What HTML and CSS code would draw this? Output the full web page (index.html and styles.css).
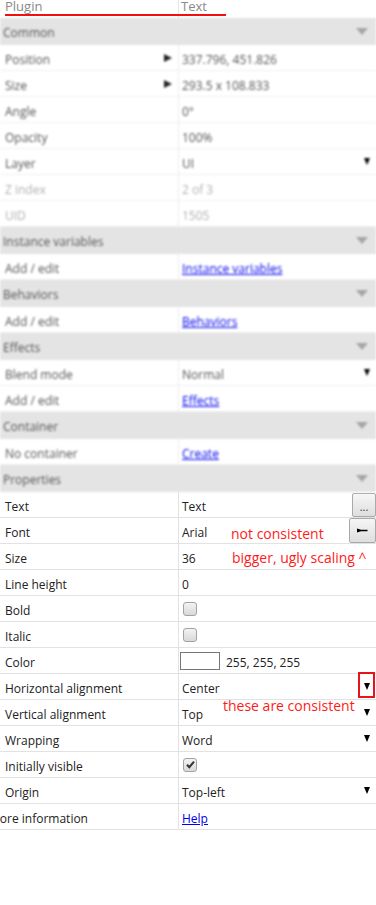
FILE: index.html
```html
<!DOCTYPE html>
<html>
<head>
<meta charset="utf-8">
<title>Properties</title>
<link rel="stylesheet" href="styles.css">
</head>
<body>
<div class="panel">
  <div class="toprow">
    <div class="k">Plugin</div>
    <div class="v">Text</div>
  </div>
  <div class="blurred">
    <div class="sec"><span>Common</span><i class="sectri"></i></div>
    <div class="row"><div class="k">Position<i class="rtri"></i></div><div class="v">337.796, 451.826</div></div>
    <div class="row"><div class="k">Size<i class="rtri"></i></div><div class="v">293.5 x 108.833</div></div>
    <div class="row"><div class="k">Angle</div><div class="v">0°</div></div>
    <div class="row"><div class="k">Opacity</div><div class="v">100%</div></div>
    <div class="row"><div class="k">Layer</div><div class="v drop">UI<i class="dtri"></i></div></div>
    <div class="row dis"><div class="k">Z index</div><div class="v">2 of 3</div></div>
    <div class="row dis"><div class="k">UID</div><div class="v">1505</div></div>
    <div class="sec"><span>Instance variables</span><i class="sectri"></i></div>
    <div class="row"><div class="k">Add / edit</div><div class="v"><a href="#">Instance variables</a></div></div>
    <div class="sec"><span>Behaviors</span><i class="sectri"></i></div>
    <div class="row"><div class="k">Add / edit</div><div class="v"><a href="#">Behaviors</a></div></div>
    <div class="sec"><span>Effects</span><i class="sectri"></i></div>
    <div class="row"><div class="k">Blend mode</div><div class="v drop">Normal<i class="dtri"></i></div></div>
    <div class="row"><div class="k">Add / edit</div><div class="v"><a href="#">Effects</a></div></div>
    <div class="sec"><span>Container</span><i class="sectri"></i></div>
    <div class="row"><div class="k">No container</div><div class="v"><a href="#">Create</a></div></div>
    <div class="sec"><span>Properties</span><i class="sectri"></i></div>
  </div>
  <div class="props">
    <div class="row"><div class="k">Text</div><div class="v btnrow">Text<span class="btn dots">...</span></div></div>
    <div class="row"><div class="k">Font</div><div class="v btnrow">Arial<span class="btn pin"><svg width="11" height="6" viewBox="0 0 11 6"><path d="M0 0.5 L4 1.8 L10.5 1.8 L10.5 3.2 L4 3.2 L0 4.5 Z" fill="#000"/></svg></span></div></div>
    <div class="row"><div class="k">Size</div><div class="v">36</div></div>
    <div class="row"><div class="k">Line height</div><div class="v">0</div></div>
    <div class="row"><div class="k">Bold</div><div class="v"><span class="cb"></span></div></div>
    <div class="row"><div class="k">Italic</div><div class="v"><span class="cb"></span></div></div>
    <div class="row"><div class="k">Color</div><div class="v"><span class="swatch"></span>255, 255, 255</div></div>
    <div class="row"><div class="k">Horizontal alignment</div><div class="v drop">Center<i class="dtri"></i></div></div>
    <div class="row"><div class="k">Vertical alignment</div><div class="v drop">Top<i class="dtri"></i></div></div>
    <div class="row"><div class="k">Wrapping</div><div class="v drop">Word<i class="dtri"></i></div></div>
    <div class="row"><div class="k">Initially visible</div><div class="v"><span class="cb checked"><svg width="11" height="11" viewBox="0 0 11 11"><path d="M2 5.8 L4.3 8.2 L9 2.6" fill="none" stroke="#333" stroke-width="2"/></svg></span></div></div>
    <div class="row"><div class="k">Origin</div><div class="v drop">Top-left<i class="dtri"></i></div></div>
    <div class="row"><div class="k cut">More information</div><div class="v"><a href="#">Help</a></div></div>
  </div>

  <div class="underline"></div>
  <div class="note n1">not consistent</div>
  <div class="note n2">bigger, ugly scaling ^</div>
  <div class="note n3">these are consistent</div>
  <div class="redbox"></div>
</div>
</body>
</html>
```
FILE: styles.css
```css
html, body {
  margin: 0;
  padding: 0;
  background: #fff;
}
body {
  font-family: "Open Sans", "Noto Sans", "DejaVu Sans", sans-serif;
  font-size: 12px;
  color: #222;
  overflow: hidden;
}
.panel {
  position: relative;
  width: 376px;
  height: 905px;
  overflow: hidden;
}
.toprow {
  display: grid;
  grid-template-columns: 179px 1fr;
  height: 18px;
  color: #8a8a8a;
  font-size: 13px;
  line-height: 12px;
}
.toprow .k {
  display: block;
  padding-top: 0;
  padding-left: 5px;
  border-right: 1px solid #e6e6e6;
}
.toprow .v {
  display: block;
  padding-top: 0;
  padding-left: 2px;
}
.blurred {
  filter: blur(0.9px);
}
.sec {
  display: flex;
  align-items: center;
  justify-content: space-between;
  height: 27px;
  box-sizing: border-box;
  padding: 2px 8px 0 3px;
  background: #e4e4e4;
  color: #555;
}
.sectri {
  width: 0;
  height: 0;
  margin-top: -2px;
  border-left: 6px solid transparent;
  border-right: 6px solid transparent;
  border-top: 7px solid #a5a5a5;
}
.row {
  display: grid;
  grid-template-columns: 179px 1fr;
  height: 26px;
  box-sizing: border-box;
  border-bottom: 1px solid #e2e2e2;
}
.blurred .row {
  border-bottom-color: #f1f1f1;
  color: #555;
}
.blurred .row.dis {
  color: #b0b0b0;
}
.k {
  display: flex;
  align-items: center;
  justify-content: space-between;
  padding: 4px 6px 0 5px;
  border-right: 1px solid #e2e2e2;
  white-space: nowrap;
}
.blurred .k {
  border-right-color: #ececec;
}
.k.cut {
  text-indent: -16px;
}
.v {
  display: flex;
  align-items: center;
  padding: 4px 6px 0 3px;
  white-space: nowrap;
}
.drop, .btnrow {
  justify-content: space-between;
}
.btnrow {
  padding-right: 0;
}
.rtri, .dtri, .cb, .swatch, .btn {
  margin-top: -4px;
}
.rtri {
  width: 0;
  height: 0;
  border-top: 4.5px solid transparent;
  border-bottom: 4.5px solid transparent;
  border-left: 8px solid #222;
}
.dtri {
  width: 0;
  height: 0;
  border-left: 3.5px solid transparent;
  border-right: 3.5px solid transparent;
  border-top: 7px solid #000;
}
a {
  color: #0000ee;
  text-decoration: underline;
}
.btn {
  display: flex;
  align-items: center;
  justify-content: center;
  box-sizing: border-box;
  border: 1px solid #a9a9a9;
  border-radius: 2px;
  background: linear-gradient(#f6f6f6, #dedede);
  color: #333;
}
.dots {
  width: 24px;
  height: 24px;
  align-items: flex-end;
  padding-bottom: 4px;
  font-size: 11px;
  line-height: 11px;
}
.pin {
  width: 27px;
  height: 25px;
}
.cb {
  display: flex;
  align-items: center;
  justify-content: center;
  width: 14px;
  height: 14px;
  box-sizing: border-box;
  border: 1px solid #a3a3a3;
  border-radius: 3px;
  background: linear-gradient(#f2f2f2, #d9d9d9);
  margin-left: 1px;
}
.swatch {
  display: inline-block;
  width: 40px;
  height: 18px;
  box-sizing: border-box;
  border: 1px solid #767676;
  background: #fff;
  margin-left: -2px;
  margin-right: 6px;
}
.underline {
  position: absolute;
  left: 5px;
  top: 14px;
  width: 221px;
  height: 2px;
  background: #f01010;
}
.note {
  position: absolute;
  color: #ff1a1a;
  font-size: 14px;
  line-height: 16px;
  white-space: nowrap;
}
.n1 { left: 231px; top: 526px; }
.n2 { left: 232px; top: 550px; }
.n3 { left: 223px; top: 698px; }
.redbox {
  position: absolute;
  left: 358px;
  top: 672px;
  width: 17px;
  height: 26px;
  box-sizing: border-box;
  border: 2px solid #e8141c;
}
```
